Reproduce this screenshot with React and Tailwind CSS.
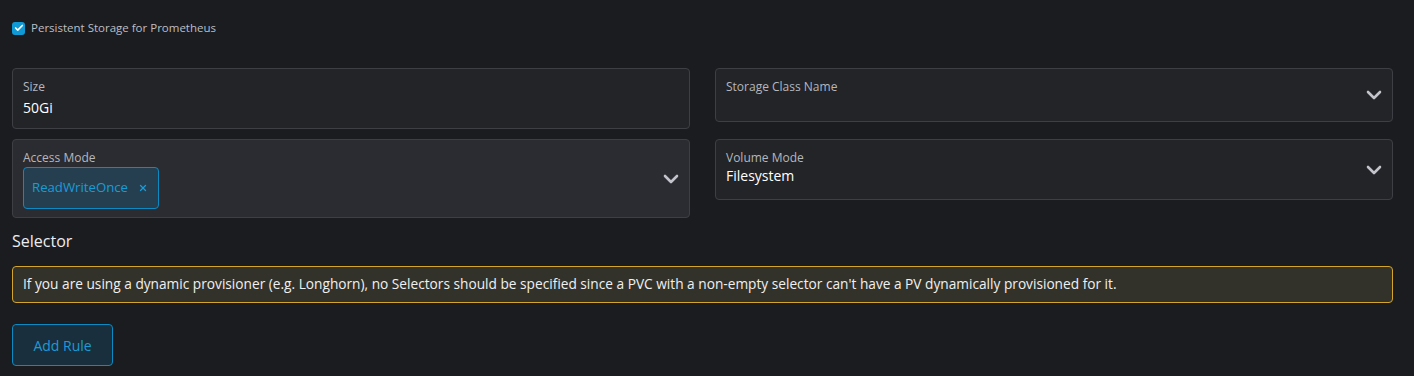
import { Check, X } from 'lucide-react';

function Chevron() {
  return (
    <svg width="16" height="10" viewBox="0 0 16 10" fill="none" className="shrink-0">
      <path d="M2 2l6 6 6-6" stroke="#c3c3cb" strokeWidth="2.6" strokeLinecap="round" strokeLinejoin="round" />
    </svg>
  );
}

function Field({ label, value, h, select, children, light, tight }) {
  return (
    <div
      className={`flex items-center rounded border border-[#3d3f45] ${light ? 'bg-[#2a2c31]' : 'bg-[#222428]'} ${h} pl-[10px] pr-[10px]`}
    >
      <div className="flex-1 min-w-0 flex flex-col self-stretch pt-[10px]">
        <div className="text-[12px] leading-[16px] text-[#b6b7bd]">{label}</div>
        {value && (
          <div className={`text-[14px] leading-[20px] ${tight ? 'mt-0' : 'mt-[3px]'} text-white font-medium`}>{value}</div>
        )}
        {children}
      </div>
      {select && <Chevron />}
    </div>
  );
}

export default function App() {
  return (
    <div className="w-full h-[376px] bg-[#1b1c20] text-white px-[12px] pr-[21px] pt-[20px]" style={{ fontFamily: '"Open Sans", sans-serif' }}>
      <label className="flex items-center gap-[6px] h-[16px]">
        <span className="w-[13px] h-[13px] rounded-[3px] bg-[#0f9ad6] flex items-center justify-center">
          <Check size={10} strokeWidth={4} color="#fff" />
        </span>
        <span className="text-[11.5px] text-[#bdbec4]">Persistent Storage for Prometheus</span>
      </label>

      <div className="grid grid-cols-2 gap-x-[25px] gap-y-[10px] mt-[32px] items-start">
        <Field label="Size" value="50Gi" h="h-[61px]" />
        <Field label="Storage Class Name" h="h-[54px]" select />
        <Field label="Access Mode" h="h-[79px]" select light>
          <div className="mt-[1px] inline-flex self-start items-center h-[42px] pl-[8px] pr-[10px] gap-[10px] rounded border border-[#0b8ac4] bg-[#253f50] text-[#1b9bd6] text-[13.2px]">
            <span>ReadWriteOnce</span>
            <X size={10} strokeWidth={3} />
          </div>
        </Field>
        <Field label="Volume Mode" value="Filesystem" h="h-[61px]" select tight />
      </div>

      <div className="mt-[12px] text-[16px] leading-[22px] text-[#ededf0]">Selector</div>

      <div className="mt-[14px] h-[37px] flex items-center px-[10px] rounded border border-[#d4a52c] bg-[#33322a] text-[13.7px] text-[#f0f0f0]">
        If you are using a dynamic provisioner (e.g. Longhorn), no Selectors should be specified since a PVC with a non-empty selector can't have a PV dynamically provisioned for it.
      </div>

      <button className="mt-[21px] h-[42px] w-[101px] rounded border border-[#0b8ac4] bg-[#1a2f3d] text-[#1b9bd6] text-[14px]">
        Add Rule
      </button>
    </div>
  );
}
